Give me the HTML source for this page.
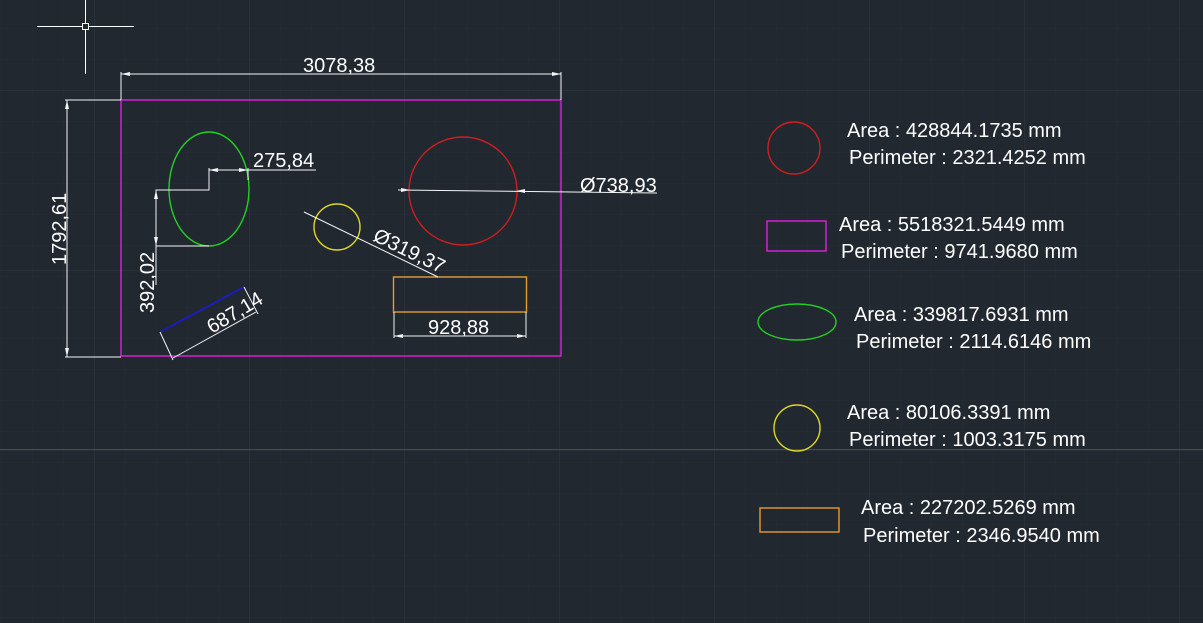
<!DOCTYPE html>
<html><head><style>
html,body{margin:0;padding:0;background:#212830;}
svg{display:block}
text{font-family:"Liberation Sans",sans-serif;fill:#fff;}
</style></head><body>
<svg width="1203" height="623" viewBox="0 0 1203 623" xmlns="http://www.w3.org/2000/svg">
<defs>
<pattern id="minor" width="31" height="31" patternUnits="userSpaceOnUse" x="1" y="-3">
<path d="M0 0H31M0 0V31" stroke="#262d36" stroke-width="1" fill="none"/>
</pattern>
<pattern id="major" width="155" height="180" patternUnits="userSpaceOnUse" x="94" y="90">
<path d="M0 0H155M0 0V180" stroke="#313945" stroke-width="1" fill="none"/>
</pattern>
</defs>
<rect width="1203" height="623" fill="#212830"/>
<rect width="1203" height="623" fill="url(#minor)"/>
<rect width="1203" height="623" fill="url(#major)"/>
<line x1="0" y1="449.5" x2="1203" y2="449.5" stroke="#8a2e2e" stroke-width="1"/>
<!-- cursor -->
<g stroke="#fff" stroke-width="1" fill="none">
<line x1="37" y1="26.5" x2="134" y2="26.5"/>
<line x1="85.5" y1="0" x2="85.5" y2="74"/>
<rect x="82.5" y="23.5" width="6" height="6" fill="#212830"/>
</g>
<!-- main drawing -->
<g fill="none" stroke-width="1.4">
<rect x="121" y="100" width="440" height="256" stroke="#e020e0"/>
<ellipse cx="209" cy="189" rx="40" ry="57" stroke="#22d022"/>
<circle cx="463" cy="191" r="54" stroke="#d01e1e"/>
<ellipse cx="337" cy="227" rx="23" ry="23" stroke="#e0d820"/>
<rect x="393.5" y="277" width="133" height="35" stroke="#e89a30"/>
<line x1="160" y1="332" x2="244" y2="287" stroke="#1a1ad0" stroke-width="1.8"/>
</g>
<g stroke="#f4f4f4" stroke-width="1" fill="none">
<line x1="121" y1="74" x2="561" y2="74"/>
<line x1="121" y1="72" x2="121" y2="100"/>
<line x1="561" y1="72" x2="561" y2="100"/>
<line x1="67" y1="100" x2="67" y2="357"/>
<line x1="65" y1="100" x2="121" y2="100"/>
<line x1="65" y1="357" x2="121" y2="357"/>
<line x1="209" y1="196" x2="316" y2="196" transform="translate(0,-26)"/>
<polyline points="156,313 156,218 209,218 209,196" transform="translate(0,-28)"/>
<line x1="156" y1="246" x2="209" y2="246"/>
<line x1="248" y1="168" x2="248" y2="180"/>
<line x1="394" y1="336" x2="526" y2="336"/>
<line x1="394" y1="312" x2="394" y2="338"/>
<line x1="526" y1="312" x2="526" y2="338"/>
<line x1="398" y1="190" x2="657" y2="193"/>
<line x1="304" y1="212" x2="438" y2="277"/>
<line x1="160" y1="332" x2="173" y2="360"/>
<line x1="244" y1="287" x2="258" y2="314"/>
<line x1="173" y1="358" x2="256" y2="312"/>
</g>
<g fill="#f4f4f4">
<path d="M121 74l9-2v4zM561 74l-9-2v4zM67 100l-2 9h4zM67 357l-2-9h4zM209 170l9-2v4zM248 170l-9-2v4zM394 336l9-2v4zM526 336l-9-2v4zM156 190l-2 9h4zM156 246l-2-9h4zM410 190l-9-2v4zM516 191l9-2v4z"/>
</g>
<g font-size="20">
<text x="303" y="72">3078,38</text>
<text x="253" y="167">275,84</text>
<text x="580" y="192">Ø738,93</text>
<text x="428" y="334">928,88</text>
<text transform="translate(66,265) rotate(-90)">1792,61</text>
<text transform="translate(154,313) rotate(-90)">392,02</text>
<text transform="translate(372,240) rotate(26)">Ø319,37</text>
<text transform="translate(212,334) rotate(-31)">687,14</text>
</g>
<!-- legend -->
<g fill="none" stroke-width="1.4">
<circle cx="794" cy="148" r="26" stroke="#d01e1e"/>
<rect x="767" y="221" width="59" height="30" stroke="#e020e0"/>
<ellipse cx="797" cy="322" rx="39" ry="18" stroke="#22d022"/>
<ellipse cx="797" cy="428" rx="23" ry="23" stroke="#e0d820"/>
<rect x="760" y="508" width="79" height="24" stroke="#e89a30"/>
</g>
<g font-size="20">
<text x="847" y="137">Area : 428844.1735 mm</text>
<text x="849" y="164">Perimeter : 2321.4252 mm</text>
<text x="839" y="231">Area : 5518321.5449 mm</text>
<text x="841" y="258">Perimeter : 9741.9680 mm</text>
<text x="854" y="321">Area : 339817.6931 mm</text>
<text x="856" y="348">Perimeter : 2114.6146 mm</text>
<text x="847" y="419">Area : 80106.3391 mm</text>
<text x="849" y="446">Perimeter : 1003.3175 mm</text>
<text x="861" y="514">Area : 227202.5269 mm</text>
<text x="863" y="542">Perimeter : 2346.9540 mm</text>
</g>
</svg>
</body></html>
